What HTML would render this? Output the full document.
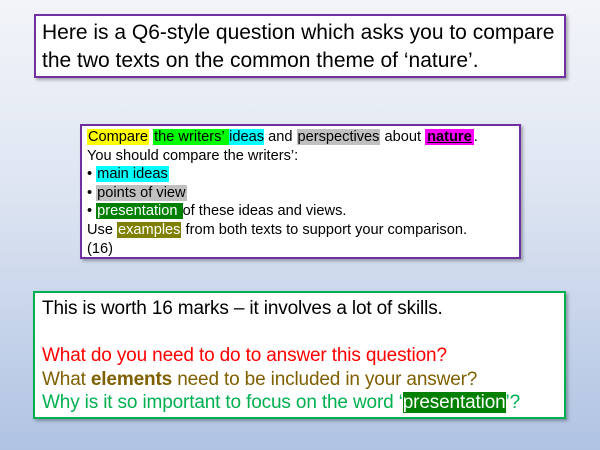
<!DOCTYPE html>
<html><head><style>
*{margin:0;padding:0;box-sizing:border-box}
body{width:600px;height:450px;overflow:hidden;background:linear-gradient(#f2f4f9 0%,#dfe6f2 40%,#b0c3e3 100%);font-family:"Liberation Sans",sans-serif;position:relative}
.b{position:absolute;background:#fff;box-shadow:2px 2px 3px rgba(0,0,0,.3)}
#t{left:34px;top:14px;width:532px;height:64px;border:2px solid #7030a0;padding:3px 0 0 6px;font-size:21px;line-height:28px;letter-spacing:0px;color:#000;white-space:nowrap}
#m{left:80px;top:124px;width:441px;height:135px;border:2px solid #7030a0;padding:2px 0 0 5px;font-size:14.6px;line-height:18.6px;color:#000;white-space:nowrap}
#m span{padding:0 1px}
#l{left:33px;top:291px;width:533px;height:128px;border:2px solid #00b050;padding:4px 0 0 7px;font-size:19px;line-height:23.5px;letter-spacing:-0.15px;white-space:nowrap}
</style></head><body>
<div class="b" id="t">Here is a Q6-style question which asks you to compare<br>the two texts on the common theme of ‘nature’.</div>
<div class="b" id="m"><span style="background:#ffff00">Compare</span> <span style="background:#00ff00">the writers’ </span><span style="background:#00ffff;padding:0">ideas</span> and <span style="background:#c0c0c0">perspectives</span> about <b style="background:#ff00ff;text-decoration:underline;padding:0 2px">nature</b>.<br>You should compare the writers’:<br>• <span style="background:#00ffff">main ideas</span><br>• <span style="background:#c0c0c0">points of view</span><br>• <span style="background:#008000;color:#fff">presentation </span>of these ideas and views.<br>Use <span style="background:#808000;color:#fff">examples</span> from both texts to support your comparison.<br>(16)</div>
<div class="b" id="l">This is worth 16 marks – it involves a lot of skills.<br><br><span style="color:#ff0000">What do you need to do to answer this question?</span><br><span style="color:#7f6000">What <b>elements</b> need to be included in your answer?</span><br><span style="color:#00b050">Why is it so important to focus on the word ‘<span style="background:#008000;color:#fff">presentation</span>’?</span></div>
</body></html>
